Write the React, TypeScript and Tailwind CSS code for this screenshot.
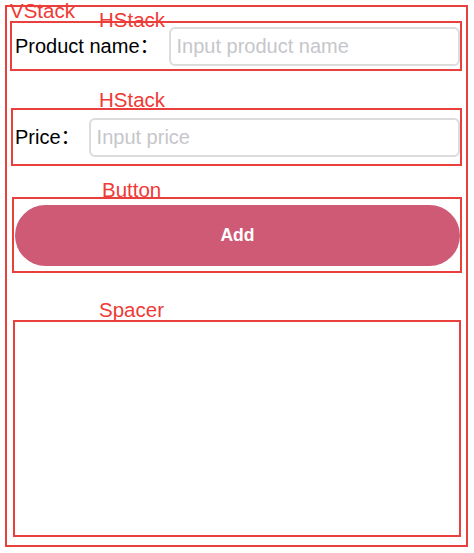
import React from "react";

const labelCls =
  "absolute text-[20.5px] leading-[21px] h-[21px] text-[#ef3a35] whitespace-nowrap";

export default function App() {
  return (
    <div
      className="relative w-[474px] h-[553px] bg-white overflow-hidden"
      style={{ fontFamily: '"Liberation Sans", Arial, "Noto Sans CJK SC", sans-serif' }}
    >
      <div className="pt-[5px] pl-[5px]">
        <div className="w-[463px] h-[542px] border-2 border-[#e9403e] flex flex-col">
          {/* HStack 1 */}
          <div className="ml-[3px] mt-[14px] w-[452px] h-[50px] border-2 border-[#e9403e] flex items-center pl-[3px] pr-[0px]">
            <span className="text-[20px] text-black whitespace-nowrap">Product name：</span>
            <div className="ml-[9px] flex-1 h-[39px] border-2 border-[#dcdcdc] rounded-[6px] flex items-center pl-[6px]">
              <span className="text-[20px] text-[#c6c6cb] whitespace-nowrap">Input product name</span>
            </div>
          </div>

          {/* HStack 2 */}
          <div className="ml-[4px] mt-[37px] w-[451px] h-[58px] border-2 border-[#e9403e] flex items-center pl-[2px] pr-[0px]">
            <span className="text-[20px] text-black whitespace-nowrap">Price：</span>
            <div className="ml-[8px] flex-1 h-[39px] border-2 border-[#dcdcdc] rounded-[6px] flex items-center pl-[6px]">
              <span className="text-[20px] text-[#c6c6cb] whitespace-nowrap">Input price</span>
            </div>
          </div>

          {/* Button */}
          <div className="ml-[5px] mt-[31px] w-[450px] h-[76px] border-2 border-[#e9403e] flex items-center pl-[1px] pr-[0px]">
            <button className="flex-1 h-[61px] rounded-full bg-[#cf5a76] flex items-center justify-center">
              <span className="text-[17.5px] font-bold text-white">Add</span>
            </button>
          </div>

          {/* Spacer */}
          <div className="ml-[6px] mt-[47px] w-[448px] h-[217px] border-2 border-[#e9403e]" />
        </div>
      </div>

      <span className={labelCls + " left-[10px] top-[0px]"}>VStack</span>
      <span className={labelCls + " left-[99px] top-[9px]"}>HStack</span>
      <span className={labelCls + " left-[99px] top-[89px]"}>HStack</span>
      <span className={labelCls + " left-[102px] top-[179px]"}>Button</span>
      <span className={labelCls + " left-[99px] top-[299px]"}>Spacer</span>
    </div>
  );
}
